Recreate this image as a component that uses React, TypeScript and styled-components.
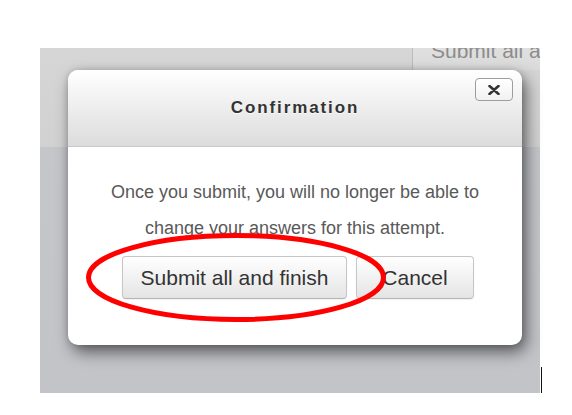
import styled, { createGlobalStyle } from "styled-components"

const GlobalStyle = createGlobalStyle`
  html, body {
    margin: 0;
    padding: 0;
    background: #ffffff;
  }
  body {
    font-family: "Liberation Sans", Arial, sans-serif;
  }
`

const Page = styled.div`
  position: relative;
  width: 572px;
  height: 415px;
  padding: 48px 0 0 40px;
  box-sizing: border-box;
  display: flex;
  align-items: flex-start;
`

const Screen = styled.div`
  position: relative;
  width: 500px;
  height: 345px;
  background: linear-gradient(
    to bottom,
    #d6d6d6 0,
    #d1d1d1 99px,
    #c5c6ca 99px,
    #c3c4c8 100%
  );
`

const CaretMark = styled.div`
  width: 1px;
  height: 26px;
  margin: 319px 0 0 1px;
  background: #111;
`

const TopBar = styled.div`
  display: flex;
  justify-content: flex-end;
  height: 22px;
  overflow: hidden;
`

const GhostButton = styled.div`
  width: 128px;
  height: 34px;
  margin-top: -10px;
  padding-left: 18px;
  box-sizing: border-box;
  border-left: 1px solid #bcbcbc;
  background: linear-gradient(to bottom, #e2e2e2, #dadada);
  color: #8c8c8c;
  font-size: 21px;
  line-height: 26px;
  white-space: nowrap;
  overflow: hidden;
`

const Dialog = styled.div`
  position: absolute;
  left: 28px;
  top: 22px;
  width: 454px;
  height: 275px;
  background: #ffffff;
  border-radius: 10px;
  box-shadow: 4px 7px 16px rgba(0, 0, 0, 0.55), 0 0 6px rgba(0, 0, 0, 0.15);
  display: flex;
  flex-direction: column;
  overflow: hidden;
`

const Header = styled.div`
  position: relative;
  height: 77px;
  box-sizing: border-box;
  border-bottom: 1px solid #c9c9c9;
  background: linear-gradient(to bottom, #ffffff, #dcdcdc);
  display: flex;
  align-items: center;
  justify-content: center;
  padding-bottom: 1px;
`

const Title = styled.h3`
  margin: 0;
  font-size: 17px;
  font-weight: bold;
  letter-spacing: 1.9px;
  color: #333333;
  text-shadow: 0 1px 0 rgba(255, 255, 255, 0.8);
`

const CloseButton = styled.button`
  position: absolute;
  top: 8px;
  right: 9px;
  width: 38px;
  height: 23px;
  padding: 0;
  box-sizing: border-box;
  border: 1px solid #9d9d9d;
  border-radius: 4px;
  background: linear-gradient(to bottom, #ffffff, #f1f1f1);
  display: flex;
  align-items: center;
  justify-content: center;
`

const Body = styled.div`
  flex: 1;
  padding-top: 27px;
  display: flex;
  flex-direction: column;
  align-items: center;
`

const Message = styled.p`
  margin: 0;
  font-size: 18px;
  line-height: 36px;
  color: #595959;
  text-align: center;
`

const Actions = styled.div`
  display: flex;
  justify-content: center;
  gap: 9px;
  margin-top: 10px;
  padding-left: 6px;
`

const ActionButton = styled.button<{ $width: number }>`
  width: ${({ $width }) => $width}px;
  height: 43px;
  box-sizing: border-box;
  padding: 0;
  border: 1px solid #c6c6c6;
  border-bottom-color: #b4b4b4;
  border-radius: 4px;
  background: linear-gradient(to bottom, #ffffff, #e4e4e4);
  box-shadow: 0 1px 2px rgba(0, 0, 0, 0.06);
  color: #333333;
  font-family: "Liberation Sans", Arial, sans-serif;
  font-size: 21px;
`

const Annotation = styled.svg`
  position: absolute;
  left: 84px;
  top: 231px;
  overflow: visible;
  pointer-events: none;
`

const App = () => {
  return (
    <>
      <GlobalStyle />
      <Page>
        <Screen>
          <TopBar>
            <GhostButton>Submit all and finish</GhostButton>
          </TopBar>
          <Dialog>
            <Header>
              <Title>Confirmation</Title>
              <CloseButton aria-label="Close">
                <svg width="12" height="10" viewBox="0 0 12 10">
                  <path d="M1.5 1 L10.5 9 M10.5 1 L1.5 9" stroke="#333" strokeWidth="2.6" strokeLinecap="round" />
                </svg>
              </CloseButton>
            </Header>
            <Body>
              <Message>
                Once you submit, you will no longer be able to
                <br />
                change your answers for this attempt.
              </Message>
              <Actions>
                <ActionButton $width={225}>Submit all and finish</ActionButton>
                <ActionButton $width={118}>Cancel</ActionButton>
              </Actions>
            </Body>
          </Dialog>
        </Screen>
        <CaretMark />
        <Annotation width="304" height="93" viewBox="0 0 304 93">
          <ellipse cx="152" cy="46.5" rx="147.5" ry="42" fill="none" stroke="#ff0000" strokeWidth="5" />
        </Annotation>
      </Page>
    </>
  )
}

export default App
